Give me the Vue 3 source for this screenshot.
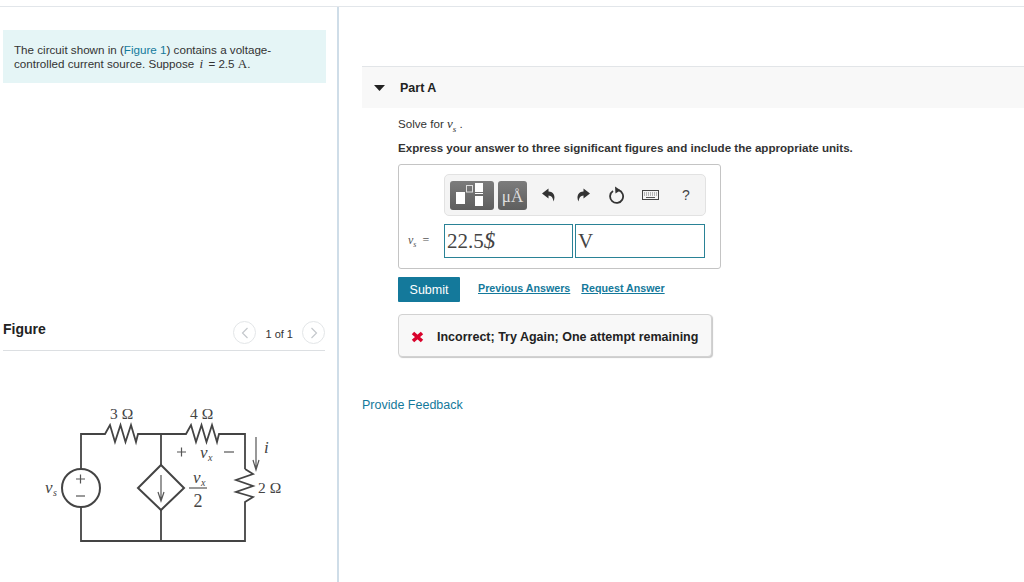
<template>
  <div class="page">
    <div class="left">
      <div class="intro">
        The circuit shown in (<a class="link">Figure 1</a>) contains a voltage-<br />
        controlled current source. Suppose <i class="math var-i">i</i> = 2.5 <span class="serif">A</span>.
      </div>
      <div class="figure-head">
        <b class="figure-title">Figure</b>
        <div class="pager">
          <span class="circle">
            <svg width="8" height="12" viewBox="0 0 8 12"><path d="M6.500 1 L1.500 6 L6.500 11" fill="none" stroke="#c4c8cc" stroke-width="1.200" /></svg>
          </span>
          <span class="pager-text">1 of 1</span>
          <span class="circle">
            <svg width="8" height="12" viewBox="0 0 8 12"><path d="M1.500 1 L6.500 6 L1.500 11" fill="none" stroke="#c4c8cc" stroke-width="1.200" /></svg>
          </span>
        </div>
      </div>
      <svg class="circuit" width="270" height="155" viewBox="0 0 270 155">
        <g fill="none" stroke="#444" stroke-width="1.800">
          <path d="M51 74 V39 H75 L80 30 L85 47 L90.500 30 L95.500 47 L101 30 L106 47 L108 39 H156 L161 30 L166 47 L171.500 30 L176.500 47 L182 30 L187 47 L189 39 H215 V74" />
          <path d="M215 74 L223 79 L206 85 L223 91 L206 97 L223 102 L215 107 V146 H51 V112" />
          <path d="M131 39 V70" />
          <path d="M131 115 V146" />
          <circle cx="51" cy="93" r="19" stroke-width="2" />
          <path d="M131 70 L154 93 L131 115 L108 93 Z" stroke-width="2" />
        </g>
        <g fill="none" stroke="#555" stroke-width="1.200">
          <path d="M46 84 H55 M50.500 79.500 V88.500" />
          <path d="M46 101 H55" />
          <path d="M131 80 V105 M128 97 L131 106 L134 97" />
          <path d="M226 42 V74 M223 65 L226 75 L229 65" />
          <path d="M159 93 H177" />
          <path d="M147 57 H156 M151.500 52.500 V61.500" />
          <path d="M194 57 H204" />
        </g>
        <g class="label">
          <text x="80" y="24">3 Ω</text>
          <text x="160" y="24">4 Ω</text>
          <text x="228" y="98">2 Ω</text>
          <text x="163" y="88" class="it">v</text>
          <text x="171" y="91" class="it small">x</text>
          <text x="168" y="112" class="two" text-anchor="middle">2</text>
          <text x="15" y="98" class="it">v</text>
          <text x="23" y="101" class="it small">s</text>
          <text x="234" y="58" class="it">i</text>
          <text x="170" y="63" class="it">v</text>
          <text x="178" y="66" class="it small">x</text>
        </g>
      </svg>
    </div>

    <div class="right">
      <div class="part-head">
        <svg class="caret" width="11" height="6" viewBox="0 0 11 6"><path d="M0 0 H11 L5.500 6 Z" fill="#222" /></svg>
        <b>Part A</b>
      </div>
      <div class="part-body">
        <p class="solve">Solve for <i class="math big">v<sub>s</sub></i> .</p>
        <p class="express">Express your answer to three significant figures and include the appropriate units.</p>

        <div class="answer-box">
          <div class="toolbar">
            <span class="tool-btn wide">
              <svg width="34" height="24" viewBox="0 0 34 24">
                <rect x="1" y="9" width="9" height="12" fill="#fff" />
                <rect x="11.500" y="2.500" width="6" height="6.500" fill="none" stroke="#ddd" />
                <rect x="20" y="0" width="8" height="9" fill="#fff" />
                <rect x="20" y="10" width="8" height="1" fill="#fff" />
                <rect x="20" y="13" width="8" height="10" fill="#fff" />
              </svg>
            </span>
            <span class="tool-btn unit">μÅ</span>
            <svg class="tool-icon undo" width="14" height="14" viewBox="0 0 14 14"><path d="M6.500 0.500 L0 5.500 L6.500 10.500 V7.500 C9.500 7.500 11 9.500 11.500 13.500 C14 8 11.500 3.500 6.500 3.500 Z" fill="#333" /></svg>
            <svg class="tool-icon redo" width="14" height="14" viewBox="0 0 14 14"><path d="M7.500 0.500 L14 5.500 L7.500 10.500 V7.500 C4.500 7.500 3 9.500 2.500 13.500 C0 8 2.500 3.500 7.500 3.500 Z" fill="#333" /></svg>
            <svg class="tool-icon reload" width="16" height="18" viewBox="0 0 16 18"><path d="M9.500 4.200 A6.500 6.500 0 1 1 4 5" fill="none" stroke="#333" stroke-width="1.800" /><path d="M6 0.500 L11.500 4.200 L6.500 7.500 Z" fill="#333" /></svg>
            <svg class="tool-icon keys" width="17" height="10" viewBox="0 0 17 10">
              <rect x="0.500" y="0.500" width="16" height="9" fill="#f4f4f4" stroke="#444" />
              <path d="M2 3 H15 M2 5 H15" stroke="#777" stroke-dasharray="1 1" />
              <path d="M4 7.500 H13" stroke="#555" />
            </svg>
            <span class="help">?</span>
          </div>
          <div class="input-row">
            <span class="var"><i class="math">v<sub>s</sub></i><span class="eq">=</span></span>
            <div class="field">22.5<i class="dollar">$</i></div>
            <div class="field unit-field">V</div>
          </div>
        </div>

        <div class="actions">
          <button class="submit">Submit</button>
          <a class="action-link">Previous Answers</a>
          <a class="action-link">Request Answer</a>
        </div>

        <div class="feedback">
          <svg width="13" height="12" viewBox="0 0 13 12"><path d="M2 2 L11 10 M11 2 L2 10" stroke="#d9032c" stroke-width="3.600" /></svg>
          <b>Incorrect; Try Again; One attempt remaining</b>
        </div>
      </div>
      <a class="provide">Provide Feedback</a>
    </div>
  </div>
</template>

<script setup>
</script>

<style scoped>
.page {
  display: flex;
  width: 1024px;
  height: 576px;
  margin-top: 6px;
  border-top: 1px solid #e2e6ea;
  box-sizing: border-box;
  font-family: "Liberation Sans", Arial, sans-serif;
  color: #333;
  overflow: hidden;
}

.left {
  width: 339px;
  flex: none;
  box-sizing: border-box;
  padding: 23px 11px 0 3px;
  border-right: 2px solid #cfdde8;
}

.intro {
  height: 53px;
  box-sizing: border-box;
  padding: 13px 11px 0;
  background: #e5f5f6;
  font-size: 11.640px;
  line-height: 14px;
}

.link {
  color: #147a9c;
}

.math {
  font-family: "Liberation Serif", serif;
  font-style: italic;
}

.math sub {
  font-size: 9px;
}

.var-i {
  font-size: 13px;
  margin: 0 2px;
}

.big {
  font-size: 13px;
}

.serif {
  font-family: "Liberation Serif", serif;
  font-size: 13px;
}

.figure-head {
  display: flex;
  justify-content: space-between;
  align-items: center;
  height: 30px;
  margin: 237px 1px 0 0;
  border-bottom: 1px solid #dcdfe2;
}

.figure-title {
  font-size: 14px;
  color: #222;
  margin-top: -13px;
}

.pager {
  display: flex;
  align-items: center;
  gap: 9px;
  margin-top: -5px;
}

.pager-text {
  font-size: 11px;
  position: relative;
  top: 1px;
}

.circle {
  width: 23px;
  height: 23px;
  box-sizing: border-box;
  display: flex;
  align-items: center;
  justify-content: center;
  border: 1px solid #e3e6e8;
  border-radius: 50%;
}

.circuit {
  display: block;
  margin: 44px 0 0 27px;
}

.label {
  font-family: "Liberation Serif", serif;
  font-size: 15.500px;
  fill: #444;
}

.it {
  font-style: italic;
  font-size: 17px;
}

.small {
  font-size: 10px;
}

.two {
  font-size: 18px;
}

.right {
  flex: 1;
  min-width: 0;
  padding: 59px 0 0 23px;
}

.part-head {
  display: flex;
  align-items: center;
  height: 41px;
  border-top: 1px solid #e2e5e8;
  background: #f8f8f8;
  font-size: 12.500px;
  color: #222;
}

.caret {
  margin: 0 15px 0 12px;
}

.part-body {
  padding-left: 36px;
}

.solve {
  margin: 9px 0 0;
  height: 14px;
  font-size: 11.600px;
  line-height: 14px;
}

.express {
  margin: 10px 0 0;
  font-size: 11.600px;
  line-height: 14px;
  font-weight: bold;
  color: #333;
}

.answer-box {
  width: 323px;
  height: 105px;
  margin-top: 9px;
  box-sizing: border-box;
  padding: 9px 15px 0 45px;
  border: 1px solid #c4c4c4;
  border-radius: 3px;
}

.toolbar {
  display: flex;
  align-items: center;
  width: 262px;
  height: 42px;
  box-sizing: border-box;
  padding-left: 5px;
  background: #f4f4f4;
  border: 1px solid #e2e2e2;
  border-radius: 5px;
}

.tool-btn {
  display: flex;
  align-items: center;
  justify-content: center;
  height: 29px;
  box-sizing: border-box;
  background: linear-gradient(#7c7c7c, #5e5e5e);
  border-radius: 3px;
  color: #ddd;
}

.wide {
  width: 44px;
}

.unit {
  width: 29px;
  margin-left: 4px;
  padding-top: 3px;
  font-family: "Liberation Serif", serif;
  font-size: 17px;
}

.tool-icon {
  flex: none;
}

.undo {
  margin-left: 15px;
}

.redo {
  margin-left: 20px;
}

.reload {
  margin-left: 19px;
}

.keys {
  margin-left: 17px;
}

.help {
  margin-left: 23px;
  font-size: 14px;
  color: #444;
}

.input-row {
  display: flex;
  align-items: center;
  margin-top: 8px;
  margin-left: -36px;
}

.var {
  width: 36px;
  font-family: "Liberation Serif", serif;
  font-size: 12px;
  color: #555;
}

.var sub {
  font-size: 8px;
}

.eq {
  margin-left: 6px;
  font-size: 12px;
}

.field {
  width: 129px;
  height: 34px;
  box-sizing: border-box;
  padding-left: 2px;
  border: 1px solid #2a8296;
  font-family: "Liberation Serif", serif;
  font-size: 21px;
  line-height: 32px;
  color: #444;
}

.unit-field {
  width: 130px;
  margin-left: 2px;
}

.dollar {
  font-size: 23px;
}

.actions {
  display: flex;
  align-items: center;
  margin-top: 8px;
  height: 25px;
}

.submit {
  width: 62px;
  height: 25px;
  margin-right: 18px;
  padding: 0;
  border: none;
  border-radius: 1px;
  background: #14799b;
  color: #fff;
  font-family: inherit;
  font-size: 12.500px;
}

.action-link {
  margin-right: 11px;
  margin-top: -3px;
  font-size: 10.700px;
  font-weight: bold;
  color: #14799b;
  text-decoration: underline;
}

.feedback {
  display: flex;
  align-items: center;
  gap: 13px;
  width: 314px;
  height: 43px;
  margin-top: 12px;
  box-sizing: border-box;
  padding: 2px 0 0 12px;
  background: #f8f8f8;
  border: 1px solid #d2d2d2;
  border-radius: 4px;
  box-shadow: 1px 1px 1px #c8c8c8;
  font-size: 12.500px;
  color: #222;
}

.provide {
  display: block;
  margin-top: 41px;
  font-size: 12.500px;
  color: #14799b;
}
</style>

<style>
body {
  background: #fff;
  overflow: hidden;
}
</style>
